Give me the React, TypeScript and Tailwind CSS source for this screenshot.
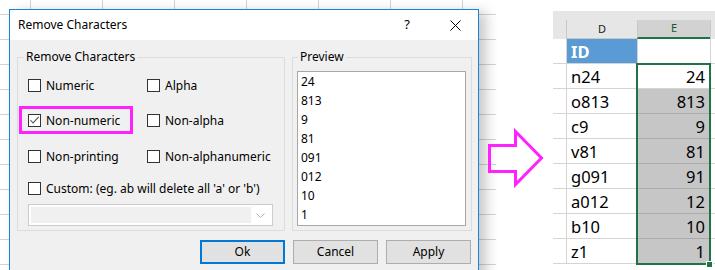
import React from 'react';

const ui = "font-['Noto_Sans',sans-serif]";

function Box({ checked }: { checked?: boolean }) {
  return (
    <span className="flex h-[13px] w-[13px] shrink-0 items-center justify-center border border-[#333333] bg-white">
      {checked && (
        <svg width="11" height="11" viewBox="0 0 11 11">
          <path d="M1.5 5 L4 8 L9.8 1.8" fill="none" stroke="#555555" strokeWidth="1.1" />
        </svg>
      )}
    </span>
  );
}

function Option({ label, checked, wide }: { label: string; checked?: boolean; wide?: boolean }) {
  return (
    <div className={`flex h-[13px] items-center gap-[5px] ${wide ? '' : 'w-[119px]'}`}>
      <Box checked={checked} />
      <span className="whitespace-nowrap leading-[13px]">{label}</span>
    </div>
  );
}

function Btn({ label, primary }: { label: string; primary?: boolean }) {
  return (
    <button
      className={`flex h-[24px] w-[85px] items-center justify-center bg-[#e1e1e1] ${
        primary ? 'border-2 border-[#0078d7]' : 'border border-[#adadad]'
      }`}
    >
      {label}
    </button>
  );
}

function Dialog() {
  const preview = ['24', '813', '9', '81', '091', '012', '10', '1'];
  return (
    <div
      className={`absolute left-[9px] top-[9px] h-[300px] w-[470px] border border-[#1883d7] bg-[#f0f0f0] text-[12px] text-black shadow-[7px_3px_12px_rgba(0,0,0,0.22)] ${ui}`}
    >
      <div className="flex h-[30px] items-center bg-white pl-[8px]">
        <span className="flex-1">Remove Characters</span>
        <span className="mr-[40px] text-[13px]">?</span>
        <svg width="11" height="11" viewBox="0 0 11 11" className="mr-[17px]">
          <path d="M0.5 0.5 L10.5 10.5 M10.5 0.5 L0.5 10.5" stroke="#000" strokeWidth="1" />
        </svg>
      </div>
      <div className="pl-[7px] pr-[6px] pt-[9px]">
        <div className="flex gap-[7px]">
          <fieldset className="flex h-[182px] w-[268px] flex-col border border-[#dcdcdc]">
            <legend className="ml-[6px] px-[2px] leading-[16px]">Remove Characters</legend>
            <div className="ml-[10px] mt-[14px] flex">
              <Option label="Numeric" />
              <Option label="Alpha" />
            </div>
            <div className="ml-[10px] mt-[22px] flex">
              <Option label="Non-numeric" checked />
              <Option label="Non-alpha" />
            </div>
            <div className="ml-[10px] mt-[23px] flex">
              <Option label="Non-printing" />
              <Option label="Non-alphanumeric" />
            </div>
            <div className="ml-[10px] mt-[19px] flex">
              <Option label="Custom: (eg. ab will delete all 'a' or 'b')" wide />
            </div>
            <div className="ml-[10px] mt-[9px] flex h-[22px] w-[245px] border border-[#cccccc] bg-white p-[2px]">
              <div className="flex-1 bg-[#f0f0f0]" />
              <div className="flex w-[19px] items-center justify-center">
                <svg width="9" height="5" viewBox="0 0 9 5">
                  <path d="M0.5 0.5 L4.5 4.5 L8.5 0.5" fill="none" stroke="#b5b5b5" strokeWidth="1" />
                </svg>
              </div>
            </div>
          </fieldset>
          <fieldset className="flex h-[182px] w-[180px] flex-col border border-[#dcdcdc]">
            <legend className="ml-[5px] px-[2px] leading-[16px]">Preview</legend>
            <div className="ml-[4px] mt-[6px] h-[155px] w-[169px] border border-[#a8a8a8] bg-white pl-[3px]">
              {preview.map((p, i) => (
                <div key={i} className="leading-[19px]">
                  {p}
                </div>
              ))}
            </div>
          </fieldset>
        </div>
        <div className="mr-[1px] mt-[9px] flex justify-end gap-[8px]">
          <Btn label="Ok" primary />
          <Btn label="Cancel" />
          <Btn label="Apply" />
        </div>
      </div>
      <div className="absolute left-[9px] top-[96px] h-[28px] w-[114px] border-[3px] border-[#ff22ff]" />
    </div>
  );
}

function Sheet() {
  const rows: [string, number][] = [
    ['n24', 24],
    ['o813', 813],
    ['c9', 9],
    ['v81', 81],
    ['g091', 91],
    ['a012', 12],
    ['b10', 10],
    ['z1', 1],
  ];
  const cell = 'h-[25px] border-b border-[#d4d4d4]';
  return (
    <div className={`relative w-[162px] pt-[11px] ${ui}`}>
      <div className="h-[9px] bg-[#e6e6e6]" />
      <div className="flex h-[19px] text-[11px]">
        <div className="w-[13px] bg-[#e6e6e6]" />
        <div className="flex w-[71px] items-center justify-center border-b border-l border-[#c8c8c8] bg-[#e6e6e6] text-[#222]">
          D
        </div>
        <div className="flex w-[73px] items-center justify-center border-b-2 border-l border-b-[#217346] border-l-[#c8c8c8] bg-[#d2d2d2] text-[#1d5235]">
          E
        </div>
        <div className="flex-1 border-l border-[#c8c8c8] bg-[#e6e6e6]" />
      </div>
      <div className="flex text-[16.5px] leading-[25px]">
        <div className={`w-[13px] ${cell}`} />
        <div className={`w-[71px] border-l bg-[#5b9bd5] pl-[4px] font-bold text-white ${cell}`}>ID</div>
        <div className={`w-[73px] border-l ${cell}`} />
        <div className={`flex-1 border-l ${cell}`} />
      </div>
      {rows.map(([a, n], i) => (
        <div key={a} className="flex text-[16.5px] leading-[25px] text-black">
          <div className={`w-[13px] ${cell}`} />
          <div className={`w-[71px] border-l pl-[4px] ${cell}`}>{a}</div>
          <div
            className={`w-[73px] border-l pr-[5px] text-right ${cell} ${
              i === 0 ? 'bg-white' : 'bg-[#c6c6c6] border-b-[#ababab]'
            }`}
          >
            {n}
          </div>
          <div className={`flex-1 border-l ${cell}`} />
        </div>
      ))}
      <div className="absolute left-[83px] top-[63px] h-[202px] w-[75px] border-2 border-[#217346]" />
      <div className="absolute left-[153px] top-[261px] h-[7px] w-[7px] border border-white bg-[#217346]" />
    </div>
  );
}

export default function App() {
  return (
    <div className="relative flex h-[270px] w-[715px] overflow-hidden bg-white">
      <div className="relative h-full w-[496px] shrink-0 bg-[linear-gradient(to_right,#d4d4d4_1px,transparent_1px),linear-gradient(to_bottom,#d4d4d4_1px,transparent_1px)] bg-[length:72px_25px] bg-[position:30px_14px]">
        <Dialog />
      </div>
      <div className="w-[57px] shrink-0" />
      <Sheet />
      <svg
        className="absolute left-[486px] top-[128px]"
        width="60"
        height="60"
        viewBox="486 128 60 60"
      >
        <polygon
          points="489.5,145.5 515.5,145.5 515.5,131.5 541.5,158 515.5,184.5 515.5,171.5 489.5,171.5"
          fill="none"
          stroke="#ff22ff"
          strokeWidth="3"
        />
      </svg>
    </div>
  );
}
